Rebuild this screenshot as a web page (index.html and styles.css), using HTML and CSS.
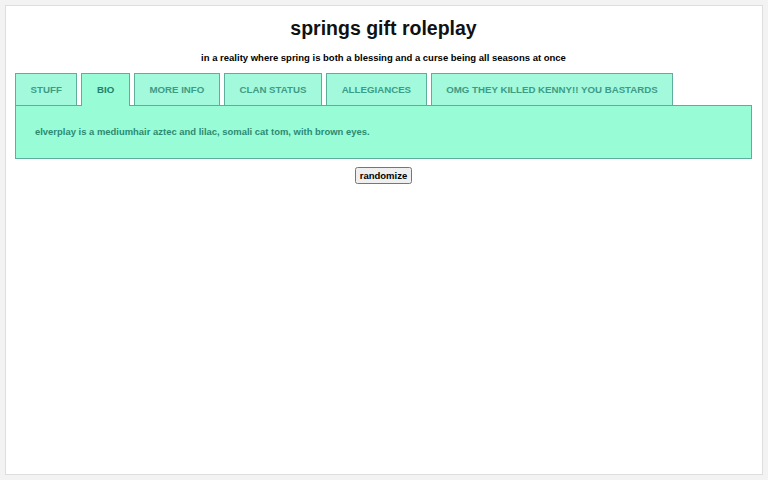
FILE: index.html
```html
<!DOCTYPE html>
<html>
    <head>
        <title>springs gift roleplay</title>
        <link rel="stylesheet" href="styles.css">
    </head>
    <body>
        <div id="wrapper">
            <h1>springs gift roleplay</h1>
            <p class="tagline">in a reality where spring is both a blessing and a curse being all seasons at once</p>
            <div class="tabs">
                <div class="tab">STUFF</div>
                <div class="tab active">BIO</div>
                <div class="tab">MORE INFO</div>
                <div class="tab">CLAN STATUS</div>
                <div class="tab">ALLEGIANCES</div>
                <div class="tab">OMG THEY KILLED KENNY!! YOU BASTARDS</div>
            </div>
            <div class="tab-content">
                elverplay is a mediumhair aztec and lilac, somali cat tom, with brown eyes.
            </div>
            <div class="controls">
                <button>randomize</button>
            </div>
        </div>
    </body>
</html>
```

FILE: styles.css
```css
body{
    margin: 0;
    padding: 5px;
    background: #f3f3f3;
    font-family: "Liberation Sans", Arial, sans-serif;
}
#wrapper{
    background: #fff;
    border: 1px solid #dedede;
    height: 468px;
    padding: 0 10px 0 9px;
}
h1{
    margin: 0;
    padding-top: 9px;
    font-size: 19.5px;
    line-height: 26px;
    text-align: center;
    color: #111;
}
.tagline{
    margin: 11px 0 0;
    font-size: 9.5px;
    font-weight: bold;
    text-align: center;
    line-height: 12px;
}
.tabs{
    display: flex;
    gap: 4px;
    margin-top: 9px;
}
.tab{
    background: #a2f9db;
    border: 1px solid #5fae9c;
    border-bottom: none;
    padding: 0 14.6px;
    height: 31px;
    line-height: 31px;
    font-size: 9.7px;
    font-weight: bold;
    color: #3d9c86;
}
.tab.active{
    background: #98fcd6;
    color: #22806d;
    position: relative;
    z-index: 1;
    margin-bottom: -1px;
    height: 32px;
}
.tab-content{
    background: #98fcd6;
    border: 1px solid #5fae9c;
    padding: 20px 19px;
    font-size: 9.45px;
    font-weight: bold;
    line-height: 12px;
    color: #2d8a72;
}
.controls{
    text-align: center;
    margin-top: 6px;
}
button{
    font-family: "Liberation Sans", Arial, sans-serif;
    font-size: 9.5px;
    font-weight: bold;
    padding: 1px 3px;
}
```
